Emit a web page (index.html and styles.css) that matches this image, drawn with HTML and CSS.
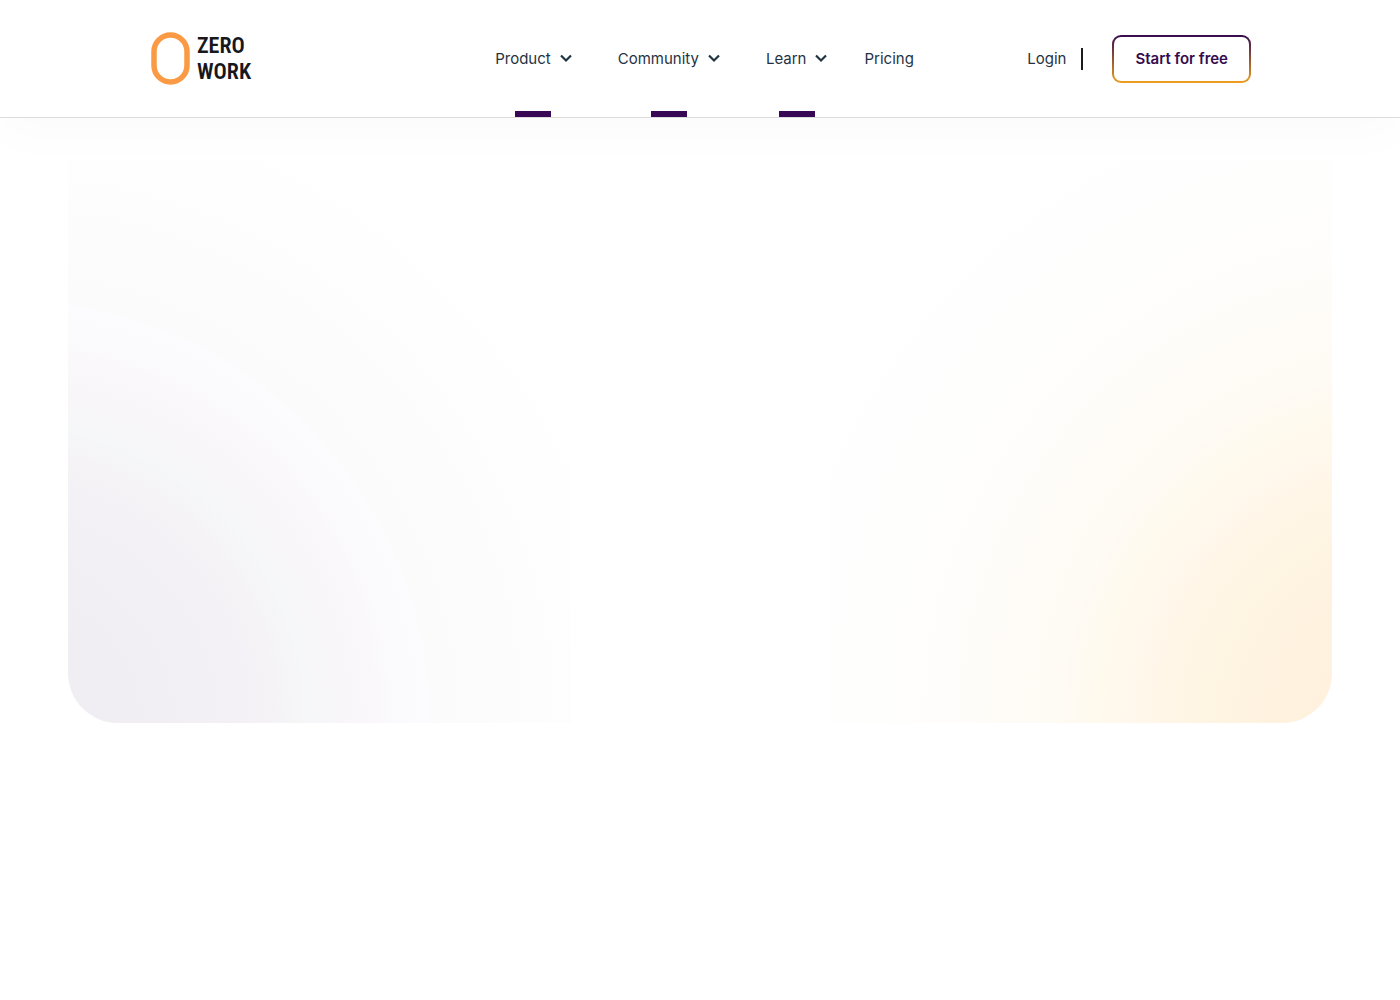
FILE: index.html
```html
<!DOCTYPE html>
<html lang="en">
<head>
  <meta charset="UTF-8">
  <meta name="viewport" content="width=device-width, initial-scale=1.0">
  <title>ZeroWork</title>
  <link rel="stylesheet" href="styles.css">
</head>
<body>
  <header class="header">
    <div class="header-inner">
      <a href="#" class="logo">
        <svg width="42" height="54" viewBox="0 0 42 54" fill="none" aria-hidden="true">
          <rect x="5" y="3" width="33" height="47" rx="16.500" stroke="#fb9a44" stroke-width="5.500"/>
        </svg>
        <span class="logo-text">
          <span>ZERO</span>
          <span>WORK</span>
        </span>
      </a>

      <nav class="nav">
        <button type="button" class="nav-item has-menu">
          Product
          <svg width="12" height="10" viewBox="0 0 12 10" fill="none" aria-hidden="true"><path d="M1 1.500 6 6.500l5-5" stroke="currentColor" stroke-width="2.200"/></svg>
        </button>
        <button type="button" class="nav-item has-menu">
          Community
          <svg width="12" height="10" viewBox="0 0 12 10" fill="none" aria-hidden="true"><path d="M1 1.500 6 6.500l5-5" stroke="currentColor" stroke-width="2.200"/></svg>
        </button>
        <button type="button" class="nav-item has-menu">
          Learn
          <svg width="12" height="10" viewBox="0 0 12 10" fill="none" aria-hidden="true"><path d="M1 1.500 6 6.500l5-5" stroke="currentColor" stroke-width="2.200"/></svg>
        </button>
        <a href="#" class="nav-item">Pricing</a>
      </nav>

      <div class="account">
        <a href="#" class="login">Login</a>
        <a href="#" class="start">Start for free</a>
      </div>
    </div>
  </header>

  <main>
    <section class="hero"></section>
  </main>
</body>
</html>
```
FILE: styles.css
```css
* {
  box-sizing: border-box;
}

body {
  margin: 0;
  background: #fff;
  color: #1f3343;
  font-family: Inter, "Liberation Sans", sans-serif;
  font-size: 15px;
  line-height: 24px;
}

a {
  color: inherit;
  text-decoration: none;
}

/* header */
.header {
  position: relative;
  z-index: 1;
  padding: 0 24px;
  background: #fff;
  border-bottom: 1px solid #dcdcdc;
  box-shadow: 0 16px 50px rgba(0, 0, 0, 0.02);
}

.header-inner {
  display: grid;
  grid-template-columns: 1fr auto 1fr;
  align-items: center;
  max-width: 1102px;
  height: 117px;
  margin: 0 auto;
}

.logo {
  display: flex;
  align-items: center;
  gap: 6px;
}

.logo-text {
  display: flex;
  flex-direction: column;
  color: #17171c;
  font-family: "Roboto Condensed", Roboto, sans-serif;
  font-size: 22px;
  font-weight: 600;
  line-height: 26px;
}

/* navigation */
.nav {
  display: flex;
}

.nav-item {
  position: relative;
  display: flex;
  align-items: center;
  gap: 9px;
  height: 117px;
  padding: 0 14px;
  border: 0;
  background: none;
  color: inherit;
  font: inherit;
  cursor: pointer;
}

.has-menu {
  padding: 0 23px;
}

.has-menu::after {
  content: "";
  position: absolute;
  bottom: 0;
  left: 50%;
  width: 36px;
  height: 6px;
  margin-left: -18px;
  background: #390854;
}

/* login and sign up */
.account {
  display: flex;
  align-items: center;
  justify-content: flex-end;
  gap: 29px;
}

.login {
  padding-right: 15px;
  border-right: 2px solid #1c1c1c;
  line-height: 22px;
}

.start {
  padding: 10px 21px;
  border: 2px solid transparent;
  border-radius: 9px;
  background: linear-gradient(#fff, #fff) padding-box, linear-gradient(#350b4e, #efa01f) border-box;
  color: #350b4e;
  font-weight: 600;
  white-space: nowrap;
}

/* hero */
.hero {
  height: 563px;
  margin: 42px 68px 0;
  border-radius: 0 0 50px 50px;
  background:
    radial-gradient(circle at -60px 100%, #f0eef3 100px, #f1eff4 160px, #f3f1f6 230px, #f5f3f5 270px, #f6f7f8 300px, #f8f6f9 330px, #faf8fb 370px, #fbfbfe 400px, #fcfcfe 420px, #fbfbfb 424px, #fcfcfc 480px, #fdfdfd 530px, #fefefe 580px, #fff 640px) left / 503px 100% no-repeat,
    radial-gradient(circle at calc(100% + 80px) 100%, #fff1de 90px, #fef3e0 160px, #fff5e4 220px, #fff7ea 270px, #fffaef 325px, #fefaf4 350px, #fffcf7 410px, #fefdfb 470px, #fefefd 530px, #fefefe 590px, #fff 660px) right / 503px 100% no-repeat;
}
```
